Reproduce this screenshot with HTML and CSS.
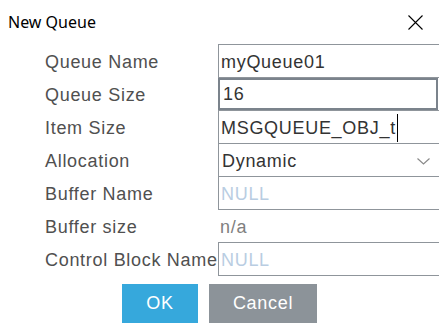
FILE: index.html
```html
<!DOCTYPE html>
<html lang="en">
<head>
    <meta charset="UTF-8">
    <meta name="viewport" content="width=device-width, initial-scale=1.0">
    <title>New Queue</title>
    <link rel="stylesheet" href="styles.css">
</head>
<body>
    <div class="dialog">
        <div class="title-bar">
            <span class="title">New Queue</span>
            <button class="close-btn" title="Close">
                <svg width="15" height="15" viewBox="0 0 15 15">
                    <path d="M0.5 0.5 L14.5 14.5 M14.5 0.5 L0.5 14.5" stroke="#000" stroke-width="1.1" fill="none"/>
                </svg>
            </button>
        </div>

        <div class="queue-form">
            <label class="field-label">Queue Name</label>
            <div class="field-box">myQueue01</div>

            <label class="field-label">Queue Size</label>
            <div class="field-box focused">16</div>

            <label class="field-label">Item Size</label>
            <div class="field-box">MSGQUEUE_OBJ_t<span class="caret"></span></div>

            <label class="field-label">Allocation</label>
            <div class="field-box select-box">
                Dynamic
                <svg class="chevron" width="13" height="7" viewBox="0 0 13 7">
                    <path d="M0.5 0.5 L6.5 6 L12.5 0.5" stroke="#8a8a8a" stroke-width="1.2" fill="none"/>
                </svg>
            </div>

            <label class="field-label">Buffer Name</label>
            <div class="field-box placeholder">NULL</div>

            <label class="field-label">Buffer size</label>
            <div class="field-plain">n/a</div>

            <label class="field-label">Control Block Name</label>
            <div class="field-box placeholder">NULL</div>
        </div>

        <div class="button-row">
            <button class="ok-btn">OK</button>
            <button class="cancel-btn">Cancel</button>
        </div>
    </div>
</body>
</html>
```

FILE: styles.css
```css
* {
    margin: 0;
    padding: 0;
    box-sizing: border-box;
}

body {
    font-family: "Liberation Sans", Arial, sans-serif;
    background: #fff;
    overflow: hidden;
}

.dialog {
    width: 439px;
    height: 331px;
    overflow: hidden;
}

.title-bar {
    height: 44px;
    display: flex;
    align-items: center;
    justify-content: space-between;
    padding: 0 16px 0 8px;
}

.title {
    font-family: "Noto Sans", "Open Sans", sans-serif;
    font-size: 16px;
    color: #000;
    padding-bottom: 1px;
}

.close-btn {
    border: none;
    background: none;
    width: 15px;
    height: 15px;
    display: flex;
    cursor: pointer;
}

.queue-form {
    display: grid;
    grid-template-columns: 173px 240px;
    grid-auto-rows: 33px;
    padding-left: 45px;
    font-size: 18px;
    letter-spacing: 0.7px;
}

.field-label {
    color: #505050;
    line-height: 33px;
    padding-top: 2px;
    white-space: nowrap;
}

.field-box {
    height: 34px;
    border: 1px solid #8f959b;
    padding: 2px 0 0 2px;
    color: #333;
    white-space: nowrap;
    display: flex;
    align-items: center;
    background: #fff;
}

.field-box.focused {
    width: 220px;
    height: 32px;
    margin-top: 1px;
    border: 2px solid #7b838c;
    padding: 1px 0 0 3px;
}

.caret {
    display: inline-block;
    width: 1px;
    height: 28px;
    background: #000;
    margin-left: 1px;
}

.select-box {
    position: relative;
    padding-left: 3px;
}

.chevron {
    position: absolute;
    left: 198px;
    top: 14px;
}

.placeholder {
    color: #b9cde2;
}

.field-plain {
    color: #808080;
    line-height: 33px;
    padding: 2px 0 0 2px;
}

.button-row {
    display: flex;
    justify-content: center;
    gap: 11px;
    margin-top: 9px;
}

.ok-btn,
.cancel-btn {
    height: 39px;
    border: none;
    color: #fff;
    font-family: "Liberation Sans", Arial, sans-serif;
    font-size: 18px;
    letter-spacing: 0.7px;
    cursor: pointer;
}

.ok-btn {
    width: 76px;
    background: #36a8dc;
}

.cancel-btn {
    width: 108px;
    background: #8c9399;
}
```
